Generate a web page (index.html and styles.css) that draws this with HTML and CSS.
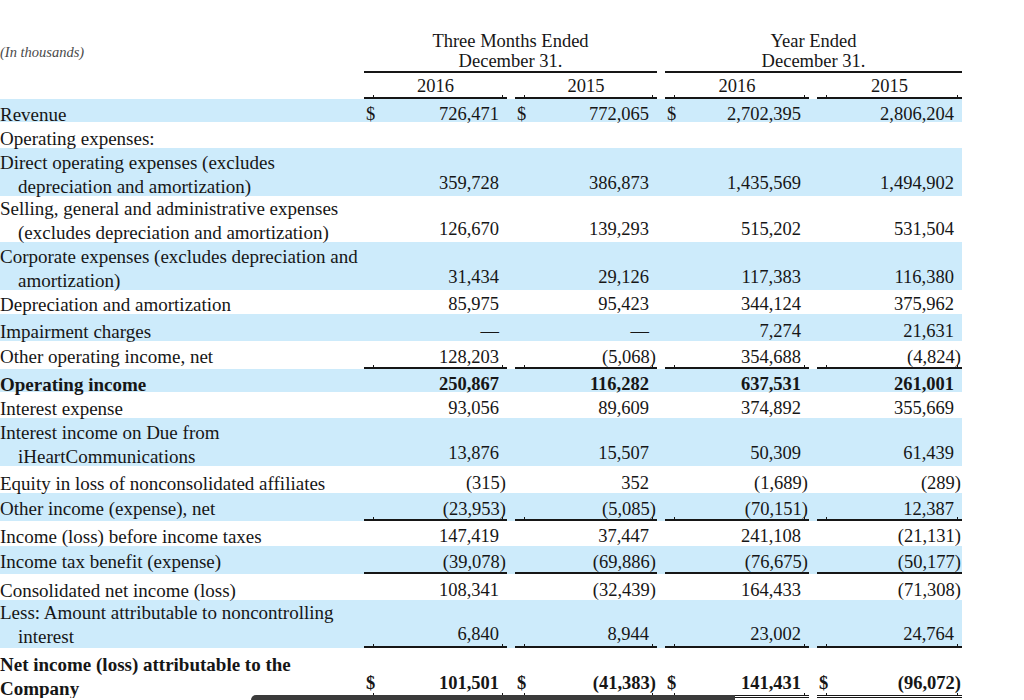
FILE: index.html
```html
<!DOCTYPE html>
<html lang="en">
<head>
<meta charset="utf-8">
<title>Consolidated Statements of Operations</title>
<link rel="stylesheet" href="styles.css">
</head>
<body>
<div class="sheet">
  <div class="head">
    <div class="units">(In thousands)</div>
    <div class="group g-three">Three Months Ended<br>December 31.</div>
    <div class="group g-year">Year Ended<br>December 31.</div>
    <div class="year tick">2016</div>
    <div class="year tick">2015</div>
    <div class="year tick">2016</div>
    <div class="year tick">2015</div>
  </div>

  <div class="rows">
    <div class="row h23 tight">
      <div class="label">Revenue</div>
      <div class="num"><span class="cur">$</span><span class="val">726,471</span></div>
      <div class="num"><span class="cur">$</span><span class="val">772,065</span></div>
      <div class="num"><span class="cur">$</span><span class="val">2,702,395</span></div>
      <div class="num"><span class="val">2,806,204</span></div>
    </div>
    <div class="row h26">
      <div class="label">Operating expenses:</div>
      <div class="num"></div><div class="num"></div><div class="num"></div><div class="num"></div>
    </div>
    <div class="row h48 two">
      <div class="label">Direct operating expenses (excludes<br>depreciation and amortization)</div>
      <div class="num"><span class="val">359,728</span></div>
      <div class="num"><span class="val">386,873</span></div>
      <div class="num"><span class="val">1,435,569</span></div>
      <div class="num"><span class="val">1,494,902</span></div>
    </div>
    <div class="row h46 two">
      <div class="label">Selling, general and administrative expenses<br>(excludes depreciation and amortization)</div>
      <div class="num"><span class="val">126,670</span></div>
      <div class="num"><span class="val">139,293</span></div>
      <div class="num"><span class="val">515,202</span></div>
      <div class="num"><span class="val">531,504</span></div>
    </div>
    <div class="row h48 two">
      <div class="label">Corporate expenses (excludes depreciation and<br>amortization)</div>
      <div class="num"><span class="val">31,434</span></div>
      <div class="num"><span class="val">29,126</span></div>
      <div class="num"><span class="val">117,383</span></div>
      <div class="num"><span class="val">116,380</span></div>
    </div>
    <div class="row h24">
      <div class="label">Depreciation and amortization</div>
      <div class="num"><span class="val">85,975</span></div>
      <div class="num"><span class="val">95,423</span></div>
      <div class="num"><span class="val">344,124</span></div>
      <div class="num"><span class="val">375,962</span></div>
    </div>
    <div class="row h27">
      <div class="label">Impairment charges</div>
      <div class="num"><span class="val">&mdash;</span></div>
      <div class="num"><span class="val">&mdash;</span></div>
      <div class="num"><span class="val">7,274</span></div>
      <div class="num"><span class="val">21,631</span></div>
    </div>
    <div class="row h28 ul">
      <div class="label">Other operating income, net</div>
      <div class="num tick"><span class="val">128,203</span></div>
      <div class="num tick"><span class="val">(5,068<span class="rp">)</span></span></div>
      <div class="num tick"><span class="val">354,688</span></div>
      <div class="num tick"><span class="val">(4,824<span class="rp">)</span></span></div>
    </div>
    <div class="row h23 bold tight">
      <div class="label">Operating income</div>
      <div class="num"><span class="val">250,867</span></div>
      <div class="num"><span class="val">116,282</span></div>
      <div class="num"><span class="val">637,531</span></div>
      <div class="num"><span class="val">261,001</span></div>
    </div>
    <div class="row h26">
      <div class="label">Interest expense</div>
      <div class="num"><span class="val">93,056</span></div>
      <div class="num"><span class="val">89,609</span></div>
      <div class="num"><span class="val">374,892</span></div>
      <div class="num"><span class="val">355,669</span></div>
    </div>
    <div class="row h48 two">
      <div class="label">Interest income on Due from<br>iHeartCommunications</div>
      <div class="num"><span class="val">13,876</span></div>
      <div class="num"><span class="val">15,507</span></div>
      <div class="num"><span class="val">50,309</span></div>
      <div class="num"><span class="val">61,439</span></div>
    </div>
    <div class="row h27">
      <div class="label">Equity in loss of nonconsolidated affiliates</div>
      <div class="num"><span class="val">(315<span class="rp">)</span></span></div>
      <div class="num"><span class="val">352</span></div>
      <div class="num"><span class="val">(1,689<span class="rp">)</span></span></div>
      <div class="num"><span class="val">(289<span class="rp">)</span></span></div>
    </div>
    <div class="row h28 ul">
      <div class="label">Other income (expense), net</div>
      <div class="num tick"><span class="val">(23,953<span class="rp">)</span></span></div>
      <div class="num tick"><span class="val">(5,085<span class="rp">)</span></span></div>
      <div class="num tick"><span class="val">(70,151<span class="rp">)</span></span></div>
      <div class="num tick"><span class="val">12,387</span></div>
    </div>
    <div class="row h25">
      <div class="label">Income (loss) before income taxes</div>
      <div class="num"><span class="val">147,419</span></div>
      <div class="num"><span class="val">37,447</span></div>
      <div class="num"><span class="val">241,108</span></div>
      <div class="num"><span class="val">(21,131<span class="rp">)</span></span></div>
    </div>
    <div class="row h28 ul">
      <div class="label">Income tax benefit (expense)</div>
      <div class="num"><span class="val">(39,078<span class="rp">)</span></span></div>
      <div class="num"><span class="val">(69,886<span class="rp">)</span></span></div>
      <div class="num"><span class="val">(76,675<span class="rp">)</span></span></div>
      <div class="num"><span class="val">(50,177<span class="rp">)</span></span></div>
    </div>
    <div class="row h26">
      <div class="label">Consolidated net income (loss)</div>
      <div class="num"><span class="val">108,341</span></div>
      <div class="num"><span class="val">(32,439<span class="rp">)</span></span></div>
      <div class="num"><span class="val">164,433</span></div>
      <div class="num"><span class="val">(71,308<span class="rp">)</span></span></div>
    </div>
    <div class="row h48 two ul">
      <div class="label">Less: Amount attributable to noncontrolling<br>interest</div>
      <div class="num tick"><span class="val">6,840</span></div>
      <div class="num tick"><span class="val">8,944</span></div>
      <div class="num tick"><span class="val">23,002</span></div>
      <div class="num tick"><span class="val">24,764</span></div>
    </div>
    <div class="row h50 bold dul">
      <div class="label flush">Net income (loss) attributable to the<br>Company</div>
      <div class="num tick"><span class="cur">$</span><span class="val">101,501</span></div>
      <div class="num tick"><span class="cur">$</span><span class="val">(41,383<span class="rp">)</span></span></div>
      <div class="num tick"><span class="cur">$</span><span class="val">141,431</span></div>
      <div class="num tick"><span class="cur">$</span><span class="val">(96,072<span class="rp">)</span></span></div>
    </div>
  </div>
</div>
<div class="dock"></div>
</body>
</html>
```

FILE: styles.css
```css
html, body {
  margin: 0;
  padding: 0;
  background: #ffffff;
  overflow: hidden;
}

body {
  font-family: "Liberation Serif", "Times New Roman", serif;
  font-size: 18.5px;
  color: #161616;
}

.sheet {
  width: 962px;
}

/* ---------- header ---------- */
.head {
  display: grid;
  grid-template-columns: 356px 143px 142px 144px 145px;
  column-gap: 8px;
  font-size: 18.5px;
}

.units {
  grid-column: 1;
  grid-row: 1 / span 2;
  padding-top: 44px;
  font-style: italic;
  font-size: 14.5px;
  line-height: 16px;
  color: #4a4a4a;
}

.group {
  grid-row: 1;
  padding-top: 31px;
  line-height: 20px;
  text-align: center;
  border-bottom: 2px solid #161616;
}

.g-three { grid-column: 2 / span 2; }
.g-year  { grid-column: 4 / span 2; }

.year {
  grid-row: 2;
  padding-top: 3px;
  padding-bottom: 1px;
  line-height: 20px;
  text-align: center;
  border-bottom: 2px solid #161616;
  position: relative;
}

/* ---------- body rows ---------- */
.row {
  display: grid;
  grid-template-columns: 356px 143px 142px 144px 145px;
  column-gap: 8px;
  align-items: end;
  box-sizing: border-box;
}

.rows .row:nth-child(odd) {
  background: #cdebfb;
}

.h23 { height: 23px; }
.h24 { height: 24px; }
.h25 { height: 25px; }
.h26 { height: 26px; }
.h27 { height: 27px; }
.h28 { height: 28px; }
.h46 { height: 46px; }
.h48 { height: 48px; }
.h50 { height: 50px; }

.label {
  font-size: 19px;
  line-height: 24px;
  padding-left: 18px;
  text-indent: -18px;
  white-space: nowrap;
  margin-bottom: -3px;
}

.label.flush {
  padding-left: 0;
  text-indent: 0;
}

.num {
  display: flex;
  align-items: baseline;
  line-height: 20px;
  padding: 0 8px 0 2px;
  position: relative;
  white-space: nowrap;
}

.two .num {
  padding-bottom: 3px;
}

.tight .label {
  margin-bottom: -5px;
}

.tight .num {
  margin-bottom: -2px;
}

.cur {
  margin-right: auto;
}

.val {
  margin-left: auto;
}

.rp {
  margin-right: -7px;
}

.bold {
  font-weight: bold;
}

.ul .label {
  margin-bottom: 0;
}

.ul .num {
  border-bottom: 2px solid #161616;
  padding-bottom: 0;
}

.ul.two .label {
  margin-bottom: -1px;
}

.ul.two .num {
  padding-bottom: 2px;
}

.dul .num {
  border-bottom: 3px double #161616;
  padding-bottom: 2px;
}

/* little marks at line ends, as printed in the filing */
.tick::before,
.tick::after {
  content: "";
  position: absolute;
  bottom: 0;
  width: 1px;
  height: 2px;
  background: #161616;
}

.tick::before { left: 9px; }
.tick::after  { right: 4px; }

/* viewer scroll thumb at the bottom edge */
.dock {
  position: fixed;
  left: 251px;
  bottom: 0;
  width: 484px;
  height: 5px;
  background: #3b3b3b;
  border-top-left-radius: 5px;
}
```
